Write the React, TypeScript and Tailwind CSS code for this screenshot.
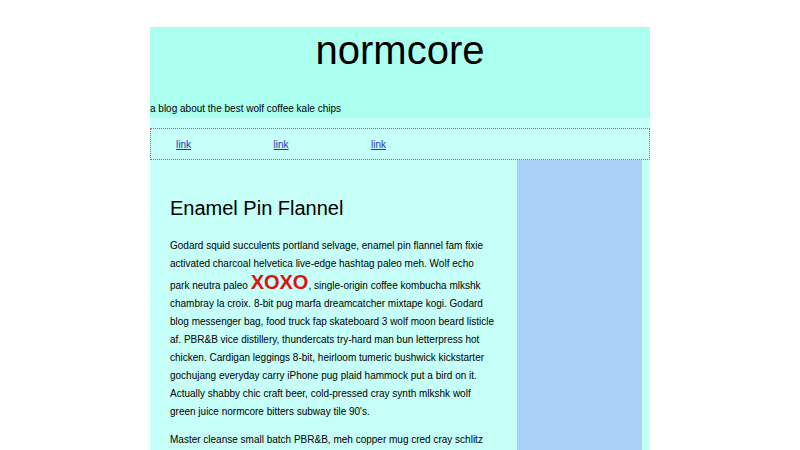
const links = ["link", "link", "link"]

export default function App() {
  return (
    <div className="min-h-screen bg-white pt-[27px] font-['Liberation_Sans',Arial,sans-serif] text-black">
      <div className="mx-auto w-[500px] bg-[#c5fff7]">
        {/* header */}
        <header className="flex h-[91px] flex-col bg-[#aaffee]">
          <h1 className="text-center text-[40px] leading-[46px]">normcore</h1>
          <p className="mt-auto text-[10px] leading-[18px]">a blog about the best wolf coffee kale chips</p>
        </header>

        {/* nav */}
        <nav className="mt-[10px] flex h-[32px] items-center border border-dotted border-[#b0605c] pb-[2px] pl-[25px]">
          {links.map((l, i) => (
            <div key={i} className="w-[97.5px]">
              <a href="#" className="text-[10px] leading-[18px] text-[#2233bb] underline">
                {l}
              </a>
            </div>
          ))}
        </nav>

        <div className="flex">
          {/* content */}
          <main className="w-[367px] pt-[37px] pr-[22px] pb-10 pl-5">
            <h2 className="text-[20px] leading-[23px]">Enamel Pin Flannel</h2>
            <p className="mt-[17px] mb-[10px] text-[10px] leading-[18px]">
              Godard squid succulents portland selvage, enamel pin flannel fam fixie activated charcoal helvetica
              live-edge hashtag paleo meh. Wolf echo park neutra paleo{" "}
              <span className="text-[20px] font-bold text-[#dd1111]">XOXO</span>, single-origin coffee kombucha
              mlkshk chambray la croix. 8-bit pug marfa dreamcatcher mixtape kogi. Godard blog messenger bag, food
              truck fap skateboard 3 wolf moon beard listicle af. PBR&amp;B vice distillery, thundercats try-hard
              man bun letterpress hot chicken. Cardigan leggings 8-bit, heirloom tumeric bushwick kickstarter
              gochujang everyday carry iPhone pug plaid hammock put a bird on it. Actually shabby chic craft beer,
              cold-pressed cray synth mlkshk wolf green juice normcore bitters subway tile 90's.
            </p>
            <p className="mb-[10px] text-[10px] leading-[18px]">
              Master cleanse small batch PBR&amp;B, meh copper mug cred cray schlitz chartreuse raclette kinfolk
              tousled. Humblebrag vaporware waistcoat, lo-fi celiac pour-over gastropub flexitarian selfies.
            </p>
          </main>

          {/* sidebar */}
          <aside className="w-[125px] bg-[#aad1f7]" />
        </div>
      </div>
    </div>
  )
}
